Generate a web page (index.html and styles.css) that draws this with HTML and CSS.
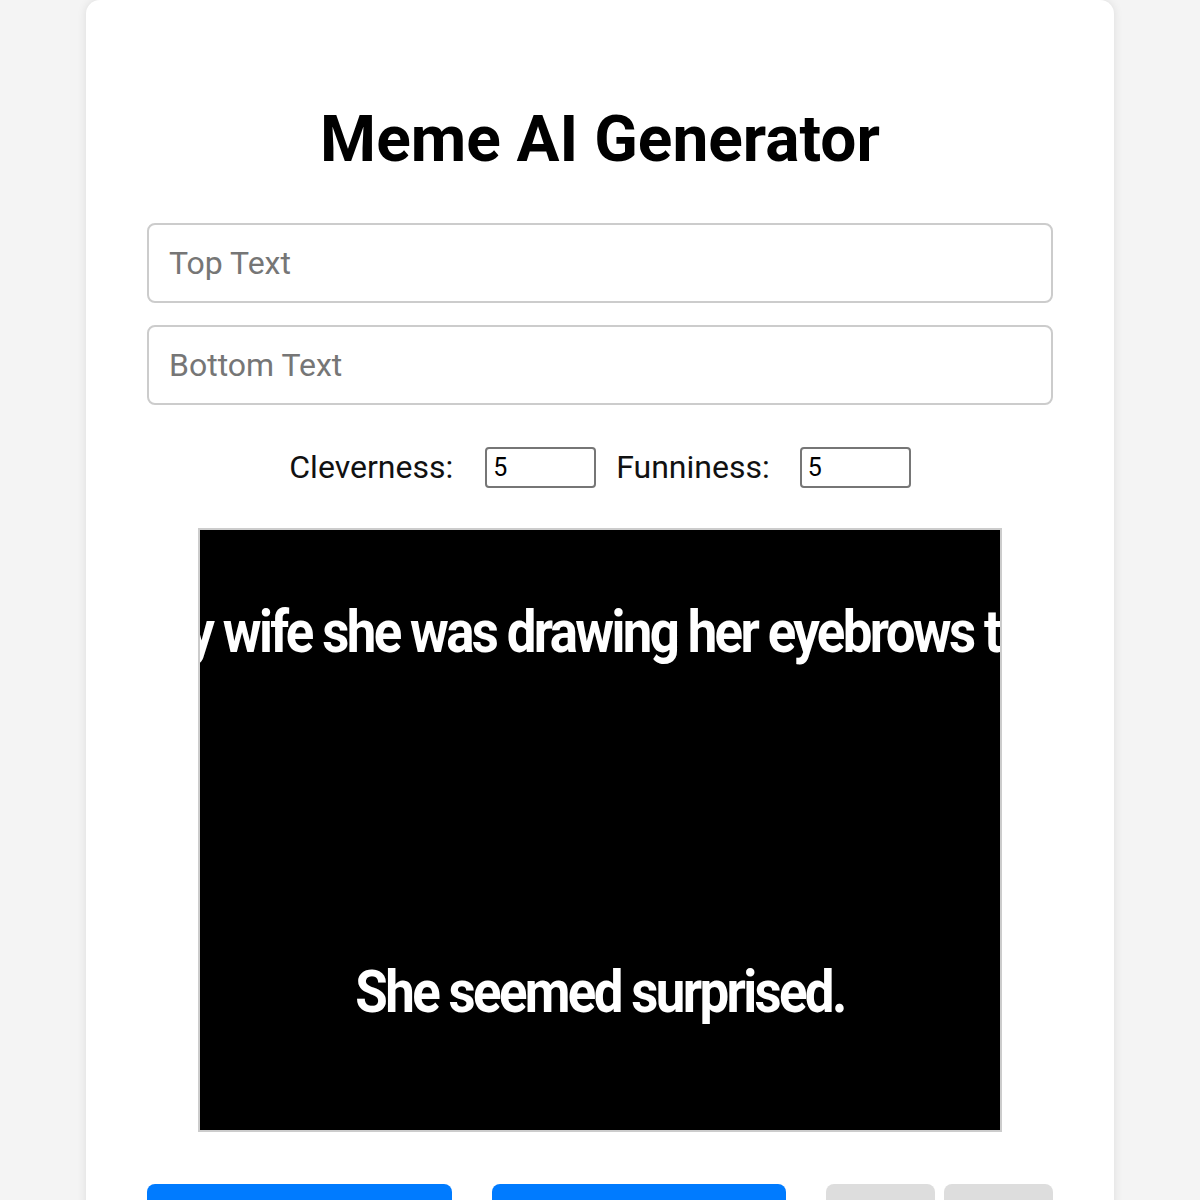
FILE: index.html
```html
<!DOCTYPE html>
<html lang="en">
<head>
<meta charset="utf-8">
<title>Meme AI Generator</title>
<link rel="stylesheet" href="styles.css">
</head>
<body>
<main class="card">
  <h1 class="title">Meme AI Generator</h1>
  <input class="text-input" type="text" placeholder="Top Text">
  <input class="text-input" type="text" placeholder="Bottom Text">
  <div class="params">
    <label class="param-label" for="clev">Cleverness:</label>
    <input class="num-input" id="clev" type="number" value="5">
    <label class="param-label param-label-fun" for="fun">Funniness:</label>
    <input class="num-input" id="fun" type="number" value="5">
  </div>
  <div class="meme">
    <div class="meme-line">I told my wife she was drawing her eyebrows too high.</div>
    <div class="meme-line">She seemed surprised.</div>
  </div>
  <div class="actions">
    <button class="btn btn-primary btn-gen">Generate Meme</button>
    <button class="btn btn-primary btn-ai">Generate AI Meme</button>
    <button class="btn btn-secondary">Undo</button>
    <button class="btn btn-secondary">Redo</button>
  </div>
</main>
</body>
</html>
```
FILE: styles.css
```css
html, body {
  margin: 0;
  padding: 0;
}
body {
  background: #f4f4f4;
  font-family: Roboto, "Liberation Sans", Arial, sans-serif;
  color: #000;
}
.card {
  width: 1028px;
  box-sizing: border-box;
  margin: 0 auto;
  background: #fff;
  border-radius: 14px;
  box-shadow: 0 0 10px rgba(0, 0, 0, 0.1);
  padding: 100px 61px 60px;
  display: flex;
  flex-direction: column;
  align-items: center;
}
.title {
  margin: 0 0 44px;
  font-size: 64px;
  line-height: 79px;
  font-weight: 700;
  text-align: center;
}
.text-input {
  width: 100%;
  height: 80px;
  box-sizing: border-box;
  border: 2px solid #ccc;
  border-radius: 8px;
  padding: 0 20px;
  font-family: Roboto, "Liberation Sans", Arial, sans-serif;
  font-size: 32px;
  color: #000;
  margin: 0 0 22px;
  outline: none;
}
.text-input::placeholder {
  color: #767676;
}
.params {
  display: flex;
  align-items: center;
  margin: 20px 0 41px;
  height: 40px;
}
.param-label {
  font-size: 32px;
  color: #111;
  margin-right: 32px;
}
.param-label-fun {
  margin-right: 30px;
}
.num-input {
  width: 111px;
  height: 41px;
  box-sizing: border-box;
  border: 2px solid #767676;
  border-radius: 4px;
  padding: 0 6px;
  font-family: Roboto, "Liberation Sans", Arial, sans-serif;
  font-size: 25px;
  color: #000;
  margin-right: 20px;
}
.num-input:last-child {
  margin-right: 0;
}
.meme {
  width: 804px;
  height: 604px;
  box-sizing: border-box;
  border: 2px solid #ccc;
  background: #000;
  overflow: hidden;
  display: flex;
  flex-direction: column;
  justify-content: space-between;
  padding: 72px 0 108px;
}
.meme-line {
  display: flex;
  justify-content: center;
  white-space: nowrap;
  color: #fff;
  font-size: 60px;
  line-height: 60px;
  font-weight: 700;
  letter-spacing: -3px;
  transform: scaleX(0.88);
}
.actions {
  align-self: stretch;
  display: flex;
  margin-top: 52px;
}
.btn {
  border: none;
  border-radius: 8px;
  height: 64px;
  padding: 22px 0 0;
  font-family: Roboto, "Liberation Sans", Arial, sans-serif;
  font-size: 24px;
  align-self: flex-start;
  box-sizing: border-box;
}
.btn-primary {
  background: #007bff;
  color: #fff;
  margin-right: 40px;
}
.btn-gen { width: 305px; }
.btn-ai { width: 294px; }
.btn-secondary {
  background: #ddd;
  color: #333;
  width: 109px;
  margin-right: 9px;
}
.btn-secondary:last-child {
  margin-right: 0;
}
```
